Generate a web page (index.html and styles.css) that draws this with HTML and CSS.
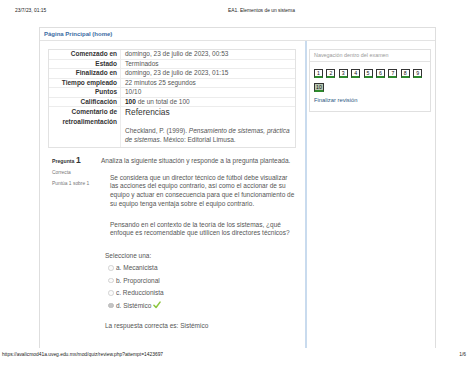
FILE: index.html
```html
<!DOCTYPE html>
<html lang="es">
<head>
<meta charset="utf-8">
<title>EA1. Elementos de un sistema</title>
<link rel="stylesheet" href="styles.css">
</head>
<body>
<header class="topbar">
  <span class="date">23/7/23, 01:15</span>
  <span class="title">EA1. Elementos de un sistema</span>
</header>
<div class="page">
  <div class="crumb">Página Principal (home)</div>
  <div class="layout">
    <main class="main">
      <table class="summary">
        <tr><th>Comenzado en</th><td>domingo, 23 de julio de 2023, 00:53</td></tr>
        <tr><th>Estado</th><td>Terminados</td></tr>
        <tr><th>Finalizado en</th><td>domingo, 23 de julio de 2023, 01:15</td></tr>
        <tr><th>Tiempo empleado</th><td>22 minutos 25 segundos</td></tr>
        <tr><th>Puntos</th><td>10/10</td></tr>
        <tr><th>Calificación</th><td><b>100</b> de un total de 100</td></tr>
        <tr class="fb"><th>Comentario de retroalimentación</th><td><div class="refh">Referencias</div><p class="ref"><span>Checkland, P. (1999). <i>Pensamiento de sistemas, práctica</i></span><br><span><i>de sistemas</i>. México: Editorial Limusa.</span></p></td></tr>
      </table>
      <section class="que">
        <div class="info">
          <div class="qno">Pregunta <span>1</span></div>
          <div class="state">Correcta</div>
          <div class="grade">Puntúa 1 sobre 1</div>
        </div>
        <div class="content">
          <p class="lead">Analiza la siguiente situación y responde a la pregunta planteada.</p>
          <div class="qtext">
            <p class="p1">Se considera que un director técnico de fútbol debe visualizar las acciones del equipo contrario, así como el accionar de su equipo y actuar en consecuencia para que el funcionamiento de su equipo tenga ventaja sobre el equipo contrario.</p>
            <p class="p2">Pensando en el contexto de la teoría de los sistemas, ¿qué enfoque es recomendable que utilicen los directores técnicos?</p>
          </div>
          <div class="prompt">Seleccione una:</div>
          <ul class="answers">
            <li><span class="radio"></span>a. Mecanicista</li>
            <li><span class="radio"></span>b. Proporcional</li>
            <li><span class="radio"></span>c. Reduccionista</li>
            <li><span class="radio on"></span>d. Sistémico <svg class="check" viewBox="0 0 10 10" width="8" height="8"><path d="M1.2 5.4 L3.8 8.2 L8.8 1.4" fill="none" stroke="#8cc63f" stroke-width="1.9" stroke-linecap="round" stroke-linejoin="round"/></svg></li>
          </ul>
          <div class="right">La respuesta correcta es: Sistémico</div>
        </div>
      </section>
    </main>
    <aside class="side">
      <div class="nav">
        <div class="nav-h">Navegación dentro del examen</div>
        <div class="nav-b">
          <div class="btns">
            <span class="qb">1</span><span class="qb">2</span><span class="qb">3</span><span class="qb">4</span><span class="qb">5</span><span class="qb">6</span><span class="qb">7</span><span class="qb">8</span><span class="qb">9</span><span class="qb cur">10</span>
          </div>
          <div class="finish">Finalizar revisión</div>
        </div>
      </div>
    </aside>
  </div>
</div>
<footer class="foot">
  <span>https://avalicmod41a.uveg.edu.mx/mod/quiz/review.php?attempt=1423697</span>
  <span>1/6</span>
</footer>
</body>
</html>
```
FILE: styles.css
```css
* { box-sizing: border-box; }
body {
  margin: 0;
  width: 474px;
  height: 366px;
  overflow: hidden;
  display: flex;
  flex-direction: column;
  font-family: "Liberation Sans", Arial, sans-serif;
  color: #333;
  background: #fff;
}
.topbar {
  height: 27px;
  display: grid;
  grid-template-columns: 213px auto;
  align-items: start;
  padding: 8px 0 0 15px;
  font-size: 4.9px;
  line-height: 6px;
  color: #222;
}
.page {
  flex: 1;
  width: 397px;
  margin-left: 39px;
  border: 1px solid #dedede;
  border-bottom: none;
  display: flex;
  flex-direction: column;
}
.crumb {
  height: 13px;
  line-height: 12px;
  padding-left: 4px;
  border-bottom: 1px solid #e3e3e3;
  font-size: 6px;
  font-weight: bold;
  color: #3b6ca3;
}
.layout {
  flex: 1;
  display: flex;
}
.main {
  width: 265px;
  padding: 8px 9px 0 8px;
}
.side {
  flex: 1;
  border-left: 2px solid #c9dbee;
  padding: 8px 0 0 2px;
}
.summary {
  width: 248px;
  border-collapse: separate;
  border-spacing: 0;
  border: 1px solid #e2e2e2;
  font-size: 6.5px;
}
.summary th, .summary td {
  border-bottom: 1px solid #ececec;
  padding: 0 3px;
  line-height: 8.5px;
  vertical-align: top;
}
.summary tr:last-child th, .summary tr:last-child td { border-bottom: none; }
.summary th {
  width: 72px;
  text-align: right;
  font-weight: bold;
  color: #333;
  border-right: 1px solid #ececec;
}
.summary td { color: #555; padding-left: 4px; }
.summary td b { color: #222; }
.fb th { line-height: 10px; }
.refh {
  font-size: 8.4px;
  line-height: 10px;
  color: #333;
}
.ref {
  margin: 8.5px 0 3.5px;
  line-height: 9px;
}
.que {
  display: grid;
  grid-template-columns: 49px 1fr;
  margin-top: 6.5px;
  padding-left: 4px;
}
.info { font-size: 4.9px; color: #777; line-height: 11px; }
.qno { color: #333; font-size: 5.2px; font-weight: bold; }
.qno span { font-size: 8.5px; }
.content { font-size: 6.5px; color: #555; }
.lead { margin: 0; line-height: 11px; }
.qtext { padding-left: 9px; line-height: 8.8px; }
.p1 { margin: 8.1px 0 0; }
.p2 { margin: 11.8px 0 0; }
.prompt { padding-left: 4px; margin-top: 13.3px; line-height: 9px; }
.answers { list-style: none; margin: 1.25px 0 0; padding: 0 0 0 7px; }
.answers li { display: flex; align-items: center; height: 12.5px; }
.radio {
  width: 5.5px; height: 5.5px;
  border-radius: 50%;
  border: 1px solid #d2d2d2;
  background: #fbfbfb;
  margin-right: 2.5px;
}
.radio.on { background: #c4c4c4; border-color: #bbb; }
.check { margin-left: 2px; }
.right { margin-top: 9.75px; padding-left: 4px; line-height: 9px; }
.nav {
  border: 1px solid #e0e0e0;
  width: 122px;
}
.nav-h {
  height: 12px;
  line-height: 11px;
  padding-left: 4px;
  border-bottom: 1px solid #e3e3e3;
  font-size: 5.4px;
  color: #9a9a9a;
}
.nav-b { padding: 7px 2px 7px 4px; }
.btns { display: flex; flex-wrap: wrap; gap: 5px 3.4px; }
.qb {
  width: 9px; height: 9px;
  border: 1px solid #333;
  border-bottom: 2px solid #2e8b2e;
  font-size: 5.2px;
  line-height: 6.5px;
  text-align: center;
  color: #111;
  background: #fff;
}
.qb.cur { width: 10px; background: #b7c7b2; }
.finish { font-size: 5.8px; line-height: 8px; color: #2a5682; margin-top: 4px; }
.foot {
  height: 18px;
  display: flex;
  justify-content: space-between;
  padding: 4px 8px 0 2px;
  font-size: 4.9px;
  color: #222;
}
```
